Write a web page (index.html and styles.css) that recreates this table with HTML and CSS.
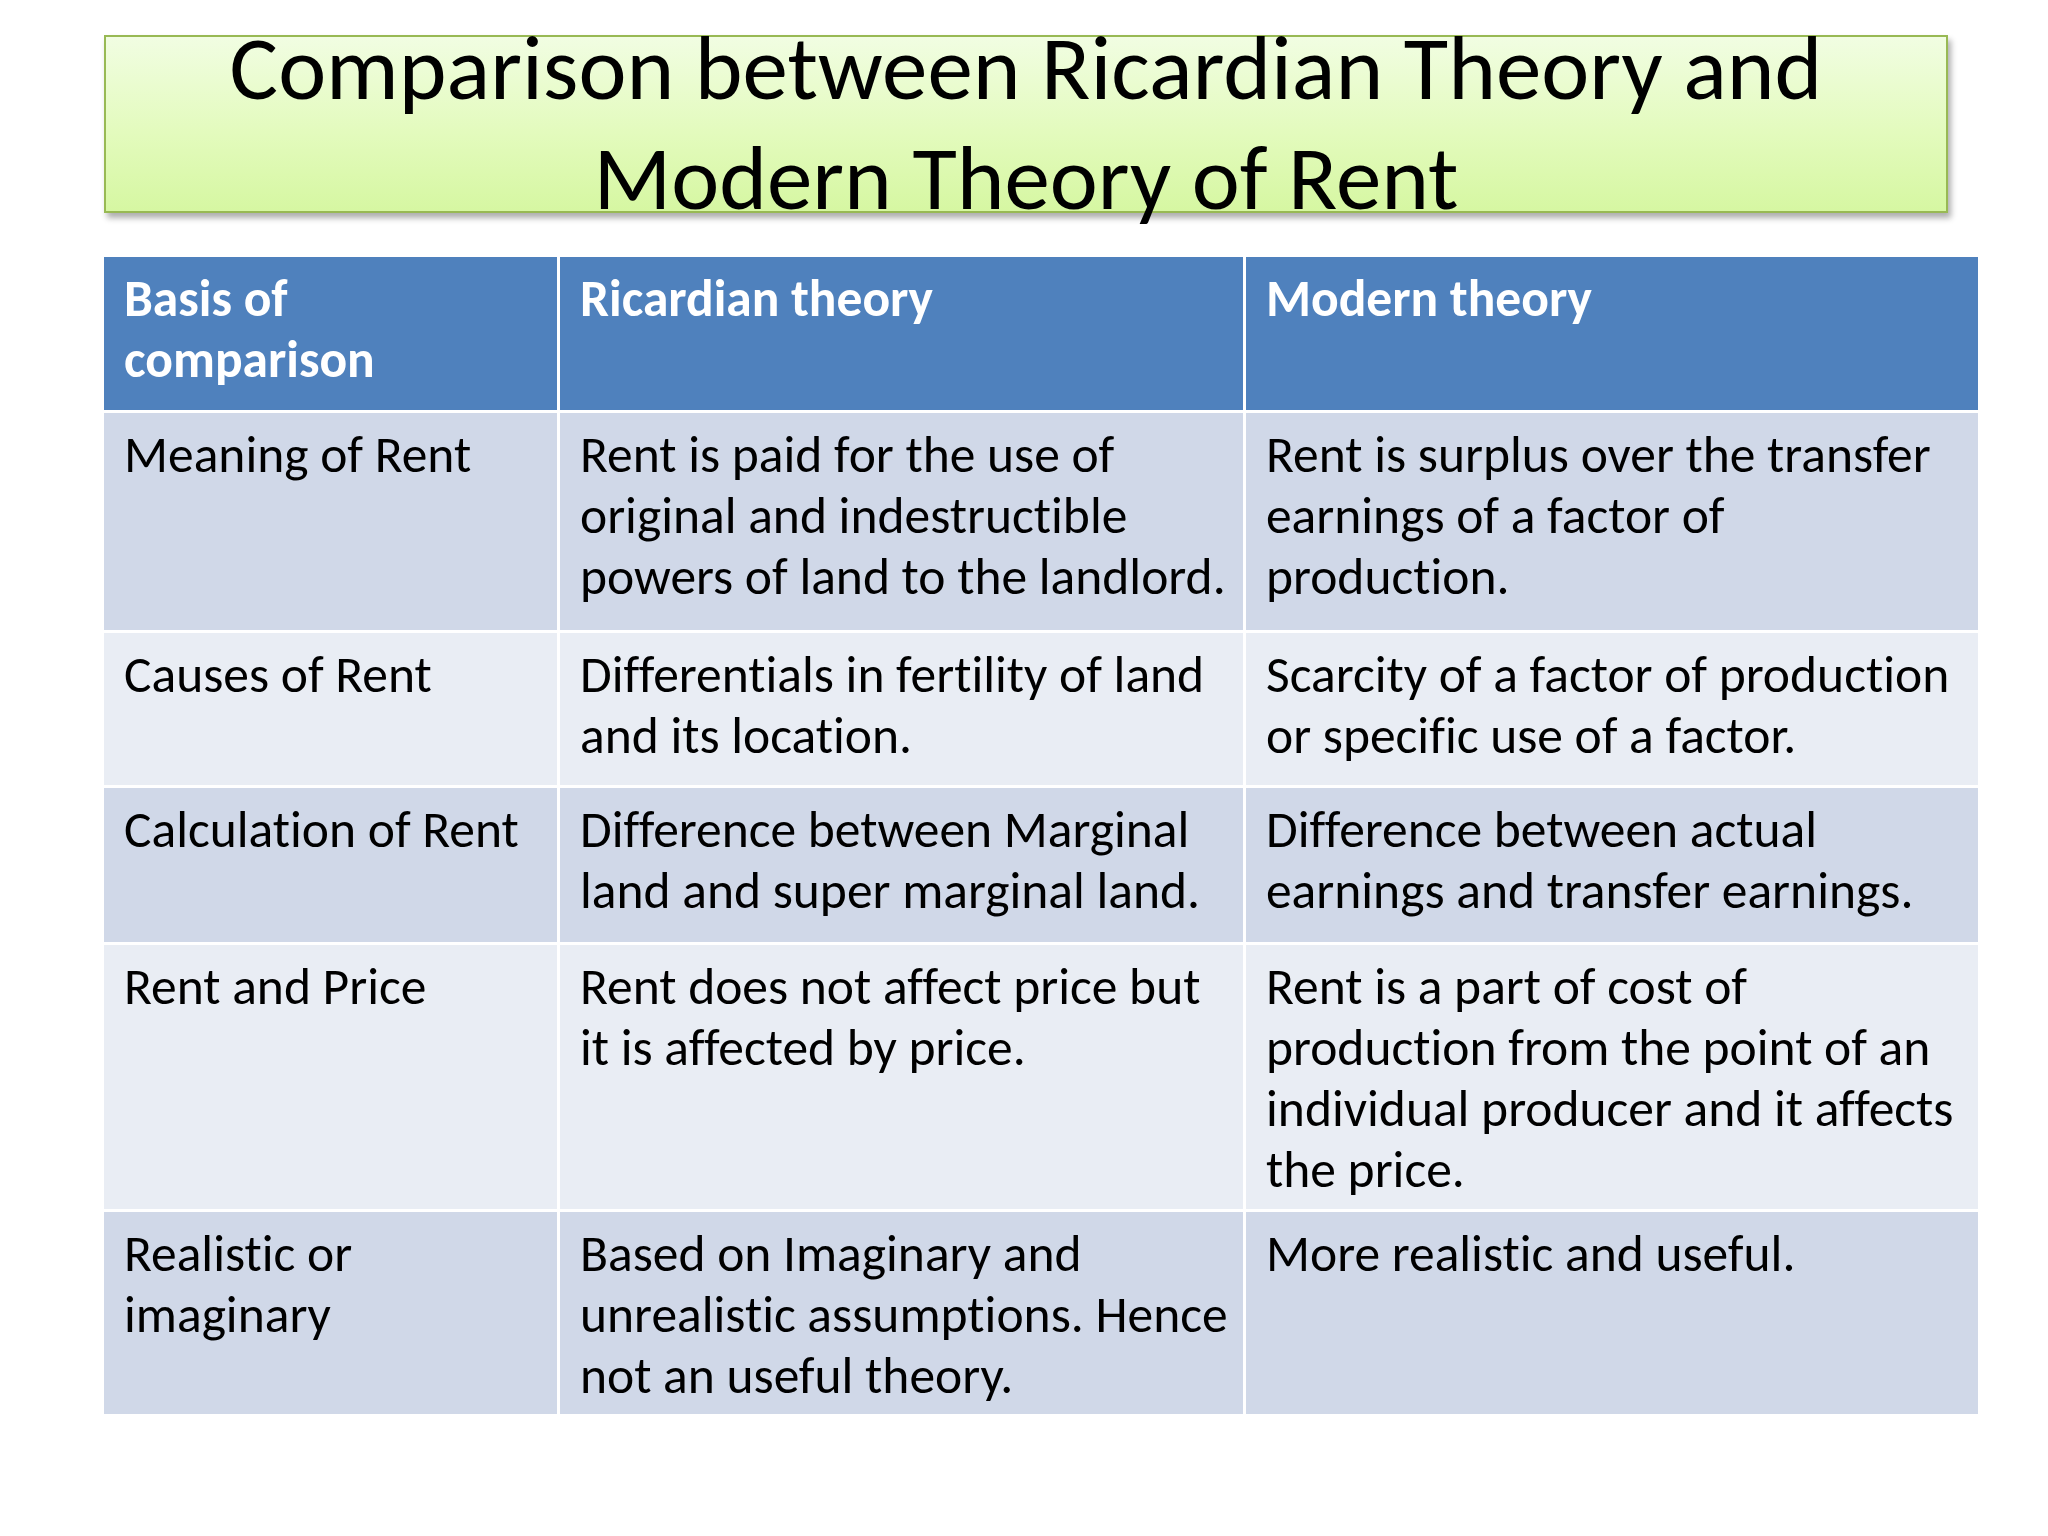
FILE: index.html
```html
<!DOCTYPE html>
<html lang="en">
<head>
<meta charset="utf-8">
<title>Comparison between Ricardian Theory and Modern Theory of Rent</title>
<link rel="stylesheet" href="styles.css">
</head>
<body>
<main class="slide">
  <header class="title-box">
    <h1 class="title">Comparison between Ricardian Theory and<br>Modern Theory of Rent</h1>
  </header>
  <section class="table">
    <div class="cell head">Basis of<br>comparison</div>
    <div class="cell head">Ricardian theory</div>
    <div class="cell head">Modern theory</div>

    <div class="cell odd">Meaning of Rent</div>
    <div class="cell odd">Rent is paid for the use of<br>original and indestructible<br>powers of land to the landlord.</div>
    <div class="cell odd">Rent is surplus over the transfer<br>earnings of a factor of<br>production.</div>

    <div class="cell even">Causes of Rent</div>
    <div class="cell even">Differentials in fertility of land<br>and its location.</div>
    <div class="cell even">Scarcity of a factor of production<br>or specific use of a factor.</div>

    <div class="cell odd">Calculation of Rent</div>
    <div class="cell odd">Difference between Marginal<br>land and super marginal land.</div>
    <div class="cell odd">Difference between actual<br>earnings and transfer earnings.</div>

    <div class="cell even">Rent and Price</div>
    <div class="cell even">Rent does not affect price but<br>it is affected by price.</div>
    <div class="cell even">Rent is a part of cost of<br>production from the point of an<br>individual producer and it affects<br>the price.</div>

    <div class="cell odd">Realistic or<br>imaginary</div>
    <div class="cell odd">Based on Imaginary and<br>unrealistic assumptions. Hence<br>not an useful theory.</div>
    <div class="cell odd">More realistic and useful.</div>
  </section>
</main>
</body>
</html>
```

FILE: styles.css
```css
* { box-sizing: border-box; }

html, body {
  margin: 0;
  padding: 0;
  background: #ffffff;
}

body {
  width: 2048px;
  height: 1536px;
  overflow: hidden;
  font-family: "Carlito", "Lato", "Liberation Sans", sans-serif;
  font-variant-ligatures: no-common-ligatures;
  color: #000000;
}

.slide {
  padding: 35px 70px 0 104px;
  display: flex;
  flex-direction: column;
}

.title-box {
  width: 1844px;
  height: 178px;
  border: 2px solid #98b954;
  background: linear-gradient(to bottom, #f1fde2 0%, #e3fbbd 55%, #d6f7a2 100%);
  box-shadow: 3px 5px 6px rgba(0, 0, 0, 0.32);
  display: flex;
  align-items: center;
  justify-content: center;
}

.title {
  margin: -2px 0 0 0;
  font-weight: normal;
  font-size: 91px;
  line-height: 110px;
  text-align: center;
  white-space: nowrap;
}

.table {
  margin-top: 44px;
  width: 1874px;
  display: grid;
  grid-template-columns: 453px 683px 732px;
  grid-template-rows: 153px 217px 152px 154px 264px 202px;
  gap: 3px;
  background: #ffffff;
}

.cell {
  padding: 11px 6px 0 20px;
  font-size: 51.5px;
  line-height: 61px;
  white-space: nowrap;
}

.head {
  background: #4f81bd;
  color: #ffffff;
  font-weight: bold;
  padding-top: 11px;
}

.odd { background: #d0d8e8; }
.even { background: #e9edf4; }
```
